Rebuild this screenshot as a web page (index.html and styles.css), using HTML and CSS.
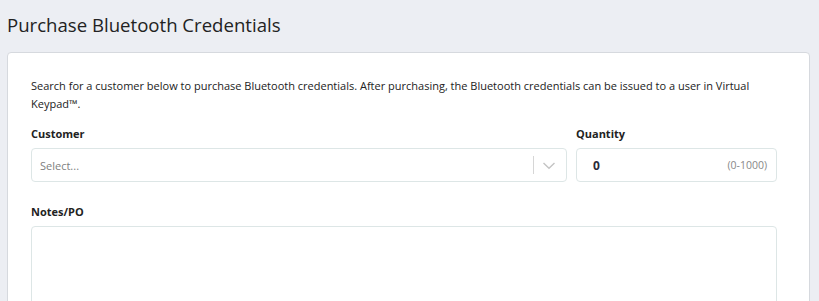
FILE: index.html
```html
<!DOCTYPE html>
<html>
<head>
<meta charset="utf-8">
<link rel="stylesheet" href="styles.css">
</head>
<body>
<h1 class="title">Purchase Bluetooth Credentials</h1>
<div class="card">
  <p class="intro">Search for a customer below to purchase Bluetooth credentials. After purchasing, the Bluetooth credentials can be issued to a user in Virtual Keypad™.</p>
  <div class="row">
    <div class="field customer">
      <label class="label">Customer</label>
      <div class="select">
        <span class="placeholder">Select...</span>
        <span class="sep"></span>
        <svg class="chev" width="20" height="20" viewBox="0 0 20 20"><path d="M4.5 8l5.5 5.2L15.5 8" fill="none" stroke="#c4c4c4" stroke-width="1.4"/></svg>
      </div>
    </div>
    <div class="field qty">
      <label class="label">Quantity</label>
      <div class="qbox">
        <span class="qval">0</span>
        <span class="range">(0-1000)</span>
      </div>
    </div>
  </div>
  <div class="field notes">
    <label class="label">Notes/PO</label>
    <div class="textarea"></div>
  </div>
</div>
</body>
</html>
```
FILE: styles.css
```css
html, body { margin: 0; padding: 0; }
body {
  background: #eceef3;
  font-family: "Open Sans", "Noto Sans", sans-serif;
  color: #222;
  padding: 0 9px 0 7px;
  height: 301px;
  overflow: hidden;
}
.title {
  margin: 0;
  padding-top: 11px;
  height: 41px;
  font-size: 18.6px;
  font-weight: 400;
  color: #222;
  line-height: 28px;
}
.card {
  background: #fff;
  border: 1px solid #d6d9de;
  border-radius: 4px;
  padding: 24px 32px 0 23px;
  height: 260px;
}
.intro {
  margin: 0 0 13px;
  font-size: 11px;
  line-height: 18px;
  color: #222;
}
.row { display: flex; gap: 9px; }
.customer { flex: 1; }
.qty { width: 201px; }
.label {
  display: block;
  font-size: 11px;
  font-weight: 700;
  line-height: 16px;
  margin-bottom: 6px;
  color: #222;
}
.select, .qbox {
  height: 32px;
  border: 1px solid #dde6e6;
  border-radius: 4px;
  display: flex;
  align-items: center;
}
.placeholder { flex: 1; padding-left: 8px; font-size: 11px; color: #808080; }
.sep { width: 1px; height: 18px; background: #d6d6d6; margin-right: 5px; }
.chev { margin-right: 7px; }
.qbox { padding: 0 9px 0 16px; }
.qval { flex: 1; font-weight: 700; font-size: 12px; color: #2a2a38; }
.range { font-size: 10.5px; color: #888; }
.notes { margin-top: 22px; }
.notes .label { margin-bottom: 6px; }
.textarea {
  height: 120px;
  border: 1px solid #dde6e6;
  border-radius: 4px;
}
```
